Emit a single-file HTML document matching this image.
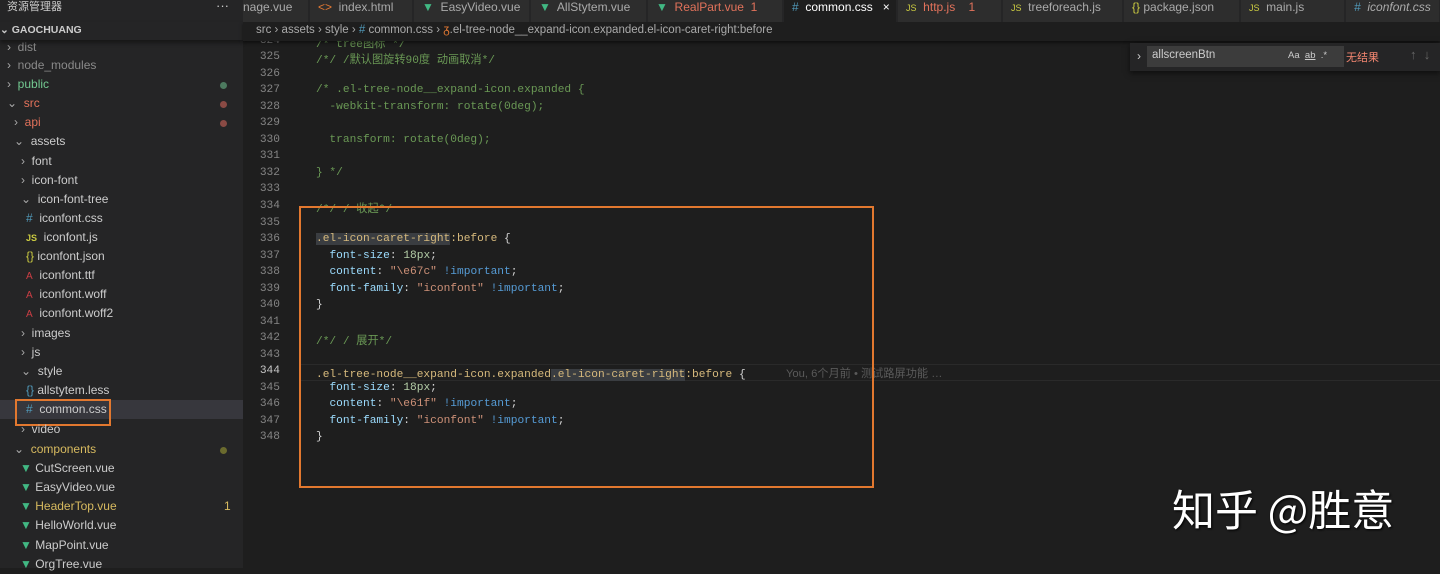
<!DOCTYPE html>
<html><head><meta charset="utf-8">
<style>
*{margin:0;padding:0;box-sizing:border-box}
body{width:1440px;height:568px;overflow:hidden;background:#1e1e1e;font-family:"Liberation Sans","Noto Sans CJK SC",sans-serif;position:relative;color:#ccc}
.a{position:absolute;white-space:pre}
#side{position:absolute;left:0;top:0;width:243px;height:568px;background:#252526}
.si{position:absolute;font-size:12px;color:#ccc;height:19px;line-height:19px;white-space:pre}
.chev{color:#aaa}
.dot{position:absolute;left:220px;width:7px;height:7px;border-radius:50%}
#tabs{position:absolute;left:243px;top:0;width:1197px;height:22px;background:#252526}
.tab{position:absolute;top:0;height:22px;line-height:15px;font-size:12px;color:#aaa;background:#2d2d2d;white-space:pre;padding-left:8px;border-right:1px solid #252526}
.ln{position:absolute;left:243px;width:37px;text-align:right;font-family:"Liberation Mono",monospace;font-size:11.2px;color:#858585}
.cl{position:absolute;left:316px;font-family:"Liberation Mono","Noto Sans CJK SC",monospace;font-size:11.2px;white-space:pre;color:#d4d4d4}
.cm{color:#6a9955}.pr{color:#9cdcfe}.st{color:#ce9178}.kw{color:#569cd6}.nu{color:#b5cea8}.se{color:#d7ba7d}
#code{position:absolute;left:0;top:2px;width:1440px;height:568px}
#sb{position:absolute;left:0;top:2px;width:243px;height:568px}
</style></head><body>
<div id="side"></div>
<div class="a" style="left:7px;top:0;font-size:11px;color:#ccc;line-height:14px">资源管理器</div>
<div class="a" style="left:216px;top:-2px;font-size:13px;color:#ccc">···</div>
<div id="sb">
<div class="si" style="left:7px;top:36px;color:#8a8a8a"><span class="chev">›</span>  dist</div>
<div class="si" style="left:7px;top:54px;color:#8a8a8a"><span class="chev">›</span>  node_modules</div>
<div class="si" style="left:7px;top:73px;color:#73c991"><span class="chev">›</span>  public</div>
<div class="dot" style="top:80px;background:#4d7a5f"></div>
<div class="si" style="left:7px;top:92px;color:#e2725b"><span class="chev">⌄</span>  src</div>
<div class="dot" style="top:99px;background:#8a4a44"></div>
<div class="si" style="left:14px;top:111px;color:#e2725b"><span class="chev">›</span>  api</div>
<div class="dot" style="top:118px;background:#8a4a44"></div>
<div class="si" style="left:14px;top:130px"><span class="chev">⌄</span>  assets</div>
<div class="si" style="left:21px;top:150px"><span class="chev">›</span>  font</div>
<div class="si" style="left:21px;top:169px"><span class="chev">›</span>  icon-font</div>
<div class="si" style="left:21px;top:188px"><span class="chev">⌄</span>  icon-font-tree</div>
<div class="si" style="left:26px;top:207px"><span style="color:#519aba">#</span>  iconfont.css</div>
<div class="si" style="left:26px;top:226px"><span style="color:#cbcb41;font-size:9px;font-weight:bold">JS</span>  iconfont.js</div>
<div class="si" style="left:26px;top:245px"><span style="color:#cbcb41">{}</span> iconfont.json</div>
<div class="si" style="left:26px;top:264px"><span style="color:#cc3e44;font-size:10px">A</span>  iconfont.ttf</div>
<div class="si" style="left:26px;top:283px"><span style="color:#cc3e44;font-size:10px">A</span>  iconfont.woff</div>
<div class="si" style="left:26px;top:302px"><span style="color:#cc3e44;font-size:10px">A</span>  iconfont.woff2</div>
<div class="si" style="left:21px;top:322px"><span class="chev">›</span>  images</div>
<div class="si" style="left:21px;top:341px"><span class="chev">›</span>  js</div>
<div class="si" style="left:21px;top:360px"><span class="chev">⌄</span>  style</div>
<div class="si" style="left:26px;top:379px"><span style="color:#519aba">{}</span> allstytem.less</div>
<div class="a" style="left:0;top:398px;width:243px;height:19px;background:#37373d"></div>
<div class="si" style="left:26px;top:398px"><span style="color:#519aba">#</span>  common.css</div>
<div class="a" style="left:15px;top:397px;width:96px;height:27px;border:2px solid #e2782f"></div>
<div class="si" style="left:21px;top:418px"><span class="chev">›</span>  video</div>
<div class="si" style="left:14px;top:438px;color:#d7ba5f"><span class="chev">⌄</span>  components</div>
<div class="dot" style="top:445px;background:#6b6b2e"></div>
<div class="si" style="left:20px;top:457px"><span style="color:#41b883">▼</span> CutScreen.vue</div>
<div class="si" style="left:20px;top:476px"><span style="color:#41b883">▼</span> EasyVideo.vue</div>
<div class="si" style="left:20px;top:495px;color:#d7ba5f"><span style="color:#41b883">▼</span> HeaderTop.vue</div>
<div class="si" style="left:224px;top:495px;color:#d7ba5f">1</div>
<div class="si" style="left:20px;top:514px"><span style="color:#41b883">▼</span> HelloWorld.vue</div>
<div class="si" style="left:20px;top:534px"><span style="color:#41b883">▼</span> MapPoint.vue</div>
<div class="si" style="left:20px;top:553px"><span style="color:#41b883">▼</span> OrgTree.vue</div>
</div>
<div class="a" style="left:0;top:22px;width:243px;height:18px;background:#252526;box-shadow:0 3px 4px rgba(0,0,0,.4)"></div>
<div class="a" style="left:0;top:24px;font-size:10.5px;font-weight:bold;color:#ccc">⌄ GAOCHUANG</div>

<div id="code">
<div class="ln" style="top:33px">324</div><div class="cl cm" style="top:33px">/* tree图标 */</div>
<div class="ln" style="top:49px">325</div><div class="cl cm" style="top:49px">/*/ /默认图旋转90度 动画取消*/</div>
<div class="ln" style="top:66px">326</div>
<div class="ln" style="top:82px">327</div><div class="cl cm" style="top:82px">/* .el-tree-node__expand-icon.expanded {</div>
<div class="ln" style="top:99px">328</div><div class="cl cm" style="top:99px">  -webkit-transform: rotate(0deg);</div>
<div class="ln" style="top:115px">329</div>
<div class="ln" style="top:132px">330</div><div class="cl cm" style="top:132px">  transform: rotate(0deg);</div>
<div class="ln" style="top:148px">331</div>
<div class="ln" style="top:165px">332</div><div class="cl cm" style="top:165px">} */</div>
<div class="ln" style="top:181px">333</div>
<div class="ln" style="top:198px">334</div><div class="cl cm" style="top:198px">/*/ / 收起*/</div>
<div class="ln" style="top:215px">335</div>
<div class="ln" style="top:231px">336</div><div class="cl" style="top:231px"><span class="se" style="background:#3a3d41">.el-icon-caret-right</span><span class="se">:before</span> {</div>
<div class="ln" style="top:248px">337</div><div class="cl" style="top:248px">  <span class="pr">font-size</span>: <span class="nu">18px</span>;</div>
<div class="ln" style="top:264px">338</div><div class="cl" style="top:264px">  <span class="pr">content</span>: <span class="st">"\e67c"</span> <span class="kw">!important</span>;</div>
<div class="ln" style="top:281px">339</div><div class="cl" style="top:281px">  <span class="pr">font-family</span>: <span class="st">"iconfont"</span> <span class="kw">!important</span>;</div>
<div class="ln" style="top:297px">340</div><div class="cl" style="top:297px">}</div>
<div class="ln" style="top:314px">341</div>
<div class="ln" style="top:330px">342</div><div class="cl cm" style="top:330px">/*/ / 展开*/</div>
<div class="ln" style="top:347px">343</div>
<div class="a" style="left:300px;top:362px;width:1140px;height:17px;border-top:1px solid #2a2a2a;border-bottom:1px solid #2a2a2a"></div>
<div class="ln" style="top:363px;color:#c6c6c6">344</div><div class="cl" style="top:363px"><span class="se">.el-tree-node__expand-icon.expanded</span><span class="se" style="background:#3a3d41">.el-icon-caret-right</span><span class="se">:before</span> {      <span style="color:#5a5a5a;font-family:'Liberation Sans','Noto Sans CJK SC',sans-serif">You, 6个月前 • 测试路屏功能 …</span></div>
<div class="ln" style="top:380px">345</div><div class="cl" style="top:380px">  <span class="pr">font-size</span>: <span class="nu">18px</span>;</div>
<div class="ln" style="top:396px">346</div><div class="cl" style="top:396px">  <span class="pr">content</span>: <span class="st">"\e61f"</span> <span class="kw">!important</span>;</div>
<div class="ln" style="top:413px">347</div><div class="cl" style="top:413px">  <span class="pr">font-family</span>: <span class="st">"iconfont"</span> <span class="kw">!important</span>;</div>
<div class="ln" style="top:429px">348</div><div class="cl" style="top:429px">}</div>
</div>

<div class="a" style="left:243px;top:22px;width:1197px;height:19px;background:#1e1e1e;box-shadow:0 2px 3px rgba(0,0,0,.5)"></div>
<div class="a" style="left:256px;top:24px;font-size:11.5px;color:#aaa">src › assets › style › <span style="color:#519aba">#</span> common.css › <span style="color:#e37933">ᵹ</span>.el-tree-node__expand-icon.expanded.el-icon-caret-right:before</div>

<div id="tabs"></div>
<div class="tab" style="left:243px;width:66px;padding-left:0">nage.vue</div>
<div class="tab" style="left:310px;width:103px"><span style="color:#e37933">&lt;&gt;</span>  index.html</div>
<div class="tab" style="left:414px;width:116px"><span style="color:#41b883">▼</span>  EasyVideo.vue</div>
<div class="tab" style="left:531px;width:116px"><span style="color:#41b883">▼</span>  AllStytem.vue</div>
<div class="tab" style="left:648px;width:135px;color:#e2725b"><span style="color:#41b883">▼</span>  RealPart.vue  1</div>
<div class="tab" style="left:784px;width:113px;background:#1e1e1e;color:#fff"><span style="color:#519aba">#</span>  common.css   ×</div>
<div class="tab" style="left:898px;width:104px;color:#e2725b"><span style="color:#cbcb41;font-size:9px">JS</span>  http.js    1</div>
<div class="tab" style="left:1003px;width:120px"><span style="color:#cbcb41;font-size:9px">JS</span>  treeforeach.js</div>
<div class="tab" style="left:1124px;width:116px"><span style="color:#cbcb41">{}</span> package.json</div>
<div class="tab" style="left:1241px;width:104px"><span style="color:#cbcb41;font-size:9px">JS</span>  main.js</div>
<div class="tab" style="left:1346px;width:94px;font-style:italic"><span style="color:#519aba">#</span>  iconfont.css</div>

<div class="a" style="left:299px;top:206px;width:575px;height:282px;border:2px solid #e2782f"></div>

<div class="a" style="left:1130px;top:43px;width:310px;height:28px;background:#252526;box-shadow:0 2px 6px rgba(0,0,0,.6)"></div>
<div class="a" style="left:1137px;top:49px;font-size:12px;color:#ccc">›</div>
<div class="a" style="left:1147px;top:46px;width:197px;height:21px;background:#3c3c3c"></div>
<div class="a" style="left:1152px;top:49px;font-size:11.5px;color:#ccc">allscreenBtn</div>
<div class="a" style="left:1288px;top:50px;font-size:9.5px;color:#ccc">Aa  <u>ab</u>  .*</div>
<div class="a" style="left:1346px;top:49px;font-size:11px;color:#f48771">无结果</div>
<div class="a" style="left:1410px;top:47px;font-size:13px;color:#666">↑  ↓</div>

<div class="a" style="left:1172px;top:477px;font-size:43px;color:#fff;font-family:'Noto Sans CJK SC',sans-serif;font-weight:400;text-shadow:1px 1px 2px #000">知乎 @胜意</div>
</body></html>
